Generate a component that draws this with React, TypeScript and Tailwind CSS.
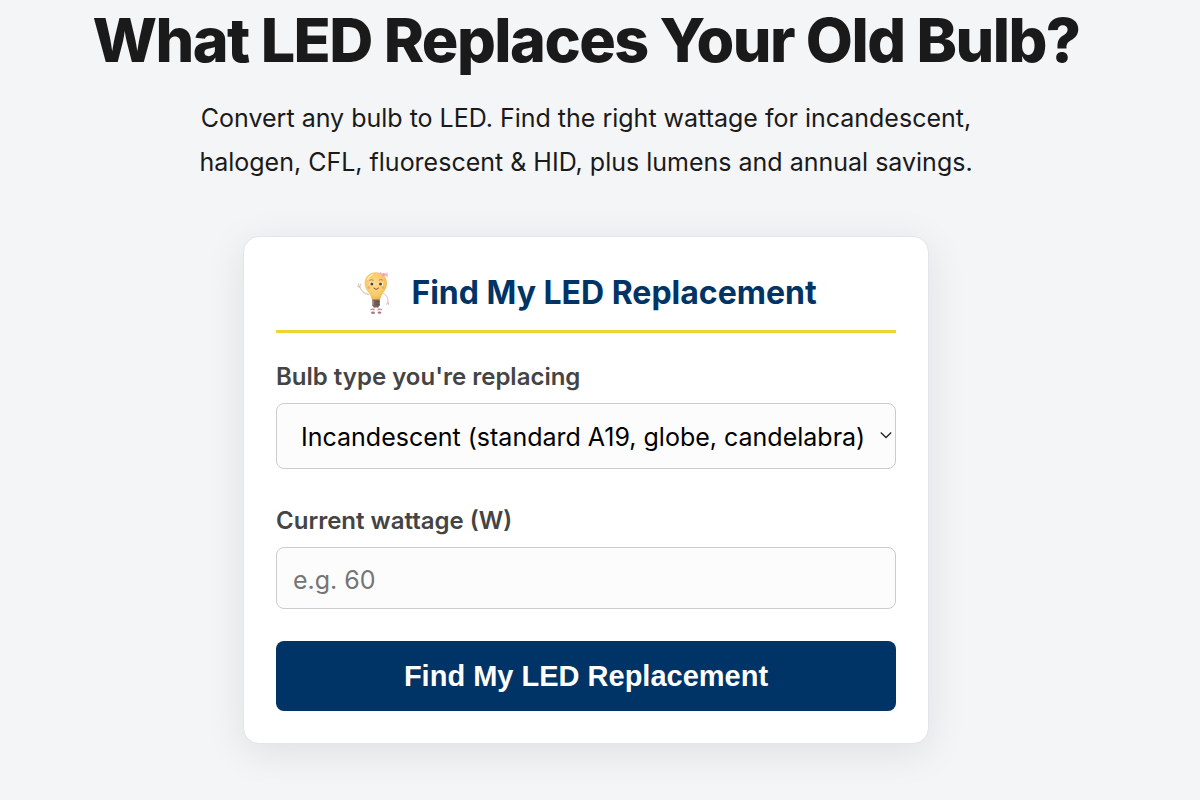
import { useState } from "react";

const BULB_TYPES = [
  "Incandescent (standard A19, globe, candelabra)",
  "Halogen",
  "CFL",
  "Fluorescent",
  "HID",
];

function BulbMascot() {
  return (
    <svg viewBox="0 0 40 48" className="h-12 w-10" fill="none" aria-hidden="true">
      <defs>
        <radialGradient id="bulb-glass" cx="0.45" cy="0.42" r="0.6">
          <stop offset="0" stopColor="#fcdc92" />
          <stop offset="0.7" stopColor="#f8c964" />
          <stop offset="1" stopColor="#efb04a" />
        </radialGradient>
      </defs>
      {/* arms */}
      <path d="M14 25.5C9.5 25 6.5 22.5 4.8 18" stroke="#dfd0cd" strokeWidth="1.4" strokeLinecap="round" />
      <path d="M3.4 14.7l1 3.2M5.6 15.1l-.8 3M2.5 17l2 1.5" stroke="#dcc9c6" strokeWidth="1.1" strokeLinecap="round" />
      <path d="M28 24.5c3 1 5 3.5 5 8.5" stroke="#e0d4d2" strokeWidth="1.3" strokeLinecap="round" />
      <path d="M33 33l-1.6 2.5M33 33l.8 2.7" stroke="#dcc9c6" strokeWidth="1.1" strokeLinecap="round" />
      {/* legs and shoes */}
      <path d="M19 37v4M23.2 37v4" stroke="#e6d6d2" strokeWidth="1.1" />
      <path d="M16 40.5q1.8-1 3.2.4M23 40.9q1.6-1.4 3.4-.3" stroke="#bd8f92" strokeWidth="1.2" strokeLinecap="round" />
      <ellipse cx="18" cy="43.8" rx="1.9" ry="1.2" fill="#a9757b" />
      <ellipse cx="24.5" cy="43.6" rx="1.9" ry="1.2" fill="#a9757b" />
      {/* glass */}
      <path
        d="M20.8 3.2C14.3 3.2 9.6 8 9.6 14.2c0 4.3 2 7.2 4.3 9.9 1.8 2.1 2 4.3 2.9 6.1.4.8 1 1.1 1.8 1.1h4.8c.8 0 1.4-.3 1.7-1.1.8-1.9 1.2-4 2.9-6.1 2.2-2.7 4-5.6 4-9.9 0-6.2-4.7-11-11.2-11Z"
        fill="url(#bulb-glass)"
      />
      <path d="M12.5 10.5c1.1-2.6 2.8-4.3 5.3-5" stroke="#fff0c6" strokeWidth="1.2" strokeLinecap="round" />
      {/* screw base */}
      <path d="M17.2 30.5h7.6v5.7l-1.7 2.2h-4.2l-1.7-2.2Z" fill="#78635c" />
      <path d="M18 31.5v4.5" stroke="#b9a69e" strokeWidth="1" />
      <path d="M20.5 32.8h4.3M20.5 35.2h4.3" stroke="#4e4245" strokeWidth=".8" />
      {/* face */}
      <path d="M14.8 11.2q1.7-1.2 3.5 0M24.2 11q1.7-1.2 3.4 0" stroke="#a9743f" strokeWidth=".8" strokeLinecap="round" />
      <ellipse cx="16.7" cy="14.9" rx="2.3" ry="2" fill="#fff5dc" />
      <ellipse cx="25.8" cy="14.9" rx="2.3" ry="2" fill="#fff5dc" />
      <circle cx="16.9" cy="14.9" r="1.5" fill="#54403f" />
      <circle cx="25.5" cy="14.9" r="1.5" fill="#54403f" />
      <circle cx="14" cy="18.6" r="1.3" fill="#f3aa70" />
      <circle cx="28.2" cy="18.6" r="1.3" fill="#f3aa70" />
      <path d="M19 19q2.2 2.4 4.4 0" stroke="#8c5134" strokeWidth="1.1" strokeLinecap="round" />
      {/* bow */}
      <path d="M28.5 5.6 24.9 2.6l.5 4.4ZM28.5 5.6l4-2.4.3 5.2Z" fill="#f4b5c5" />
      <circle cx="28.6" cy="5.6" r="1.5" fill="#ee9cb3" />
    </svg>
  );
}

export default function App() {
  const [bulbType, setBulbType] = useState(BULB_TYPES[0]);
  const [wattage, setWattage] = useState("");

  return (
    <div className="min-h-screen bg-[#f4f5f7] pt-2 pr-7 pb-14 font-[Inter,'Liberation_Sans',sans-serif] text-[#1a1a1a]">
      <header className="text-center">
        <h1 className="text-[61px] leading-16 font-extrabold tracking-tight">
          What LED Replaces Your Old Bulb?
        </h1>
        <p className="mx-auto mt-6 max-w-[800px] text-[25px] leading-11">
          Convert any bulb to LED. Find the right wattage for incandescent,
          halogen, CFL, fluorescent &amp; HID, plus lumens and annual savings.
        </p>
      </header>

      <main className="mx-auto mt-13 max-w-[686px] rounded-2xl border border-[#e2e5e9] bg-white p-8 shadow-[0_8px_40px_rgba(0,0,0,0.09)]">
        <h2 className="flex items-center justify-center gap-4 border-b-3 border-[#f0d52e] pb-[13px] text-[32px] leading-12 font-bold text-[#003366]">
          <BulbMascot />
          Find My LED Replacement
        </h2>
        <form onSubmit={(e) => e.preventDefault()}>
          <label
            htmlFor="bulb-type"
            className="mt-6 block text-2xl leading-10 font-semibold text-[#444]"
          >
            Bulb type you're replacing
          </label>
          <div className="relative mt-1.5">
            <select
              id="bulb-type"
              value={bulbType}
              onChange={(e) => setBulbType(e.target.value)}
              className="block h-[66px] w-full appearance-none rounded-lg border border-[#ccc] bg-[#fcfcfc] pt-1 pl-6 text-[25px] text-black"
            >
              {BULB_TYPES.map((type) => (
                <option key={type}>{type}</option>
              ))}
            </select>
            <svg
              viewBox="0 0 12 8"
              className="pointer-events-none absolute top-7 right-1 h-2 w-3"
              fill="none"
              stroke="#222"
              strokeWidth="1.3"
              aria-hidden="true"
            >
              <path d="M.8 1.5 6 6.5l5.2-5" />
            </svg>
          </div>
          <label
            htmlFor="wattage"
            className="mt-8 block text-2xl leading-10 font-semibold text-[#444]"
          >
            Current wattage (W)
          </label>
          <input
            id="wattage"
            type="text"
            inputMode="numeric"
            placeholder="e.g. 60"
            value={wattage}
            onChange={(e) => setWattage(e.target.value)}
            className="mt-1.5 block h-[62px] w-full rounded-lg border border-[#ccc] bg-[#fcfcfc] px-4 pt-1 text-[25px] placeholder:text-[#757575]"
          />
          <button
            type="submit"
            className="mt-8 block w-full rounded-lg bg-[#003366] py-[15px] font-['Liberation_Sans',sans-serif] text-[29px] leading-10 font-bold text-white"
          >
            Find My LED Replacement
          </button>
        </form>
      </main>
    </div>
  );
}
